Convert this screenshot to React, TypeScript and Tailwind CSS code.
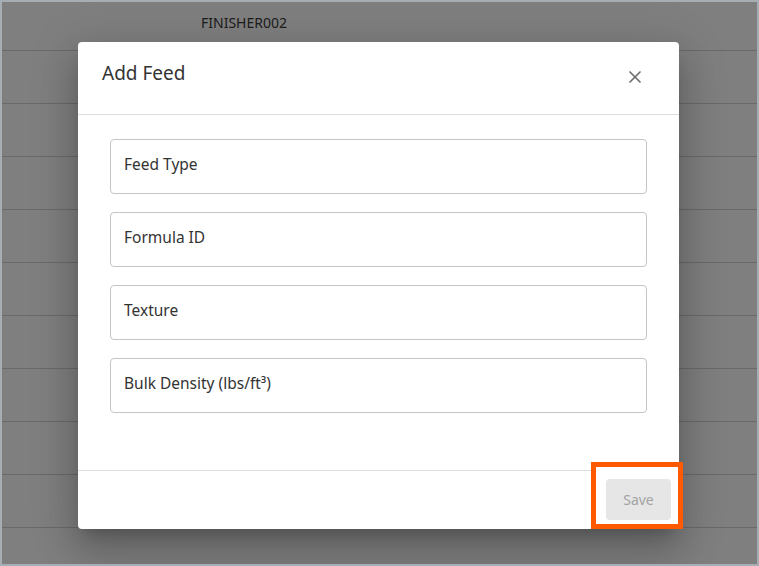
import { X } from "lucide-react";

const fields = ["Feed Type", "Formula ID", "Texture", "Bulk Density (lbs/ft³)"];

const App = () => {
  return (
    <div className="w-[759px] h-[566px] border-2 border-[#a6adb3] font-['Noto_Sans',sans-serif]">
      <div className="relative w-full h-full bg-white overflow-hidden">
        {/* Page behind the dialog */}
        <div className="h-[48px] pt-[10px] pl-[199px] text-[14px] text-[#3a3a3a]">FINISHER002</div>
        {Array.from({ length: 10 }).map((_, i) => (
          <div key={i} className="h-[53px] border-t border-[#d4d4d4]" />
        ))}

        {/* Backdrop */}
        <div className="absolute inset-0 bg-black/50 flex items-start pl-[76px] pt-[40px]">
          <div className="w-[601px] bg-white rounded-[4px] shadow-[0_11px_15px_-7px_rgba(0,0,0,0.2),0_24px_38px_3px_rgba(0,0,0,0.14),0_9px_46px_8px_rgba(0,0,0,0.12)]">
            {/* Header */}
            <div className="h-[73px] border-b border-[#dedede] flex items-start justify-between pl-6 pr-[34px] pt-[17px]">
              <h2 className="text-[19px] leading-[28px] text-[#333]">Add Feed</h2>
              <button className="text-[#707070] mt-[8px]">
                <X size={20} strokeWidth={2.1} />
              </button>
            </div>

            {/* Body */}
            <div className="px-8 pt-6 pb-[57px] flex flex-col gap-[18px]">
              {fields.map((f) => (
                <div
                  key={f}
                  className="h-[55px] border border-[#c4c4c4] rounded-[4px] flex items-center px-[13px] pb-[3px] text-[15.5px] text-[#333]"
                >
                  {f}
                </div>
              ))}
            </div>

            {/* Footer */}
            <div className="relative h-[59px] border-t border-[#dedede] flex justify-end items-start pt-2 pr-2">
              <div className="absolute left-[513px] -right-[4px] -top-[9px] bottom-0 border-[5px] border-[#ff5a00] bg-white" />
              <button className="relative w-[65px] h-[41px] rounded-[4px] bg-[#e6e6e6] text-[14px] text-[#a3a3a3]">
                Save
              </button>
            </div>
          </div>
        </div>
      </div>
    </div>
  );
};

export default App;
